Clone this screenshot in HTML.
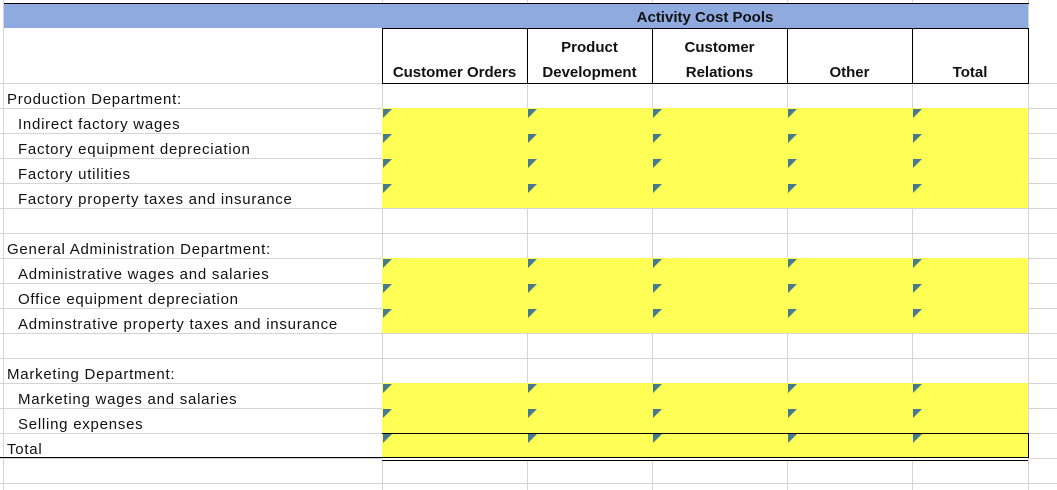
<!DOCTYPE html>
<html><head><style>
body{margin:0;width:1057px;height:490px;overflow:hidden;background:#fff;position:relative;font-family:"Liberation Sans",sans-serif;}
div{position:absolute;box-sizing:border-box}
.h{height:1px;background:#d4d4d4;left:0;width:1057px}
.v{width:1px;background:#d4d4d4;top:0;height:490px}
.y{background:#ffff55;left:382px;width:646px}
.t{font-size:15px;letter-spacing:0.75px;color:#111;white-space:nowrap;line-height:25px;height:25px;padding-top:3px}
.m{width:0;height:0;border-top:9px solid #457a90;border-right:9px solid transparent}
.hd{font-size:15px;font-weight:bold;color:#111;text-align:center;line-height:25px;white-space:nowrap}
</style></head><body>
<div class="v" style="left:3px"></div>
<div class="v" style="left:382px"></div>
<div class="v" style="left:527px"></div>
<div class="v" style="left:652px"></div>
<div class="v" style="left:787px"></div>
<div class="v" style="left:912px"></div>
<div class="v" style="left:1028px"></div>
<div class="h" style="top:83px"></div><div class="h" style="top:108px"></div><div class="h" style="top:133px"></div><div class="h" style="top:158px"></div><div class="h" style="top:183px"></div><div class="h" style="top:208px"></div><div class="h" style="top:233px"></div><div class="h" style="top:258px"></div><div class="h" style="top:283px"></div><div class="h" style="top:308px"></div><div class="h" style="top:333px"></div><div class="h" style="top:358px"></div><div class="h" style="top:383px"></div><div class="h" style="top:408px"></div><div class="h" style="top:433px"></div><div class="h" style="top:458px"></div><div class="h" style="top:483px"></div>
<div style="left:4px;top:3px;width:1025px;height:1px;background:#000"></div>
<div style="left:4px;top:4px;width:1024px;height:24px;background:#8eaadf"></div>
<div class="hd" style="left:382px;top:5px;width:646px;line-height:26px">Activity Cost Pools</div>
<div style="left:382px;top:28px;width:647px;height:56px;background:#fff;border:1px solid #000"></div>
<div style="left:527px;top:28px;width:1px;height:56px;background:#000"></div>
<div style="left:652px;top:28px;width:1px;height:56px;background:#000"></div>
<div style="left:787px;top:28px;width:1px;height:56px;background:#000"></div>
<div style="left:912px;top:28px;width:1px;height:56px;background:#000"></div>
<div class="hd" style="left:382px;top:60px;width:145px">Customer Orders</div>
<div class="hd" style="left:527px;top:35px;width:125px">Product<br>Development</div>
<div class="hd" style="left:652px;top:35px;width:135px">Customer<br>Relations</div>
<div class="hd" style="left:787px;top:60px;width:125px">Other</div>
<div class="hd" style="left:912px;top:60px;width:116px">Total</div>
<div class="y" style="top:108px;height:100px"></div>
<div class="y" style="top:258px;height:75px"></div>
<div class="y" style="top:383px;height:75px"></div>
<div style="left:382px;top:433px;width:646px;height:1px;background:#000"></div>
<div style="left:0;top:457px;width:382px;height:1px;background:#000"></div>
<div style="left:382px;top:457px;width:646px;height:4px;border-top:1px solid #000;border-bottom:1px solid #000;background:#fff"></div>
<div style="left:1028px;top:433px;width:1px;height:25px;background:#000"></div>
<div class="t" style="left:7px;top:84px">Production Department:</div>
<div class="t" style="left:18px;top:109px">Indirect factory wages</div>
<div class="t" style="left:18px;top:134px">Factory equipment depreciation</div>
<div class="t" style="left:18px;top:159px">Factory utilities</div>
<div class="t" style="left:18px;top:184px">Factory property taxes and insurance</div>
<div class="t" style="left:7px;top:234px">General Administration Department:</div>
<div class="t" style="left:18px;top:259px">Administrative wages and salaries</div>
<div class="t" style="left:18px;top:284px">Office equipment depreciation</div>
<div class="t" style="left:18px;top:309px">Adminstrative property taxes and insurance</div>
<div class="t" style="left:7px;top:359px">Marketing Department:</div>
<div class="t" style="left:18px;top:384px">Marketing wages and salaries</div>
<div class="t" style="left:18px;top:409px">Selling expenses</div>
<div class="t" style="left:7px;top:434px">Total</div>
<script>
var cols=[383,528,653,788,913],rows=[109,134,159,184,259,284,309,384,409,434],h='';
rows.forEach(function(r){cols.forEach(function(c){h+='<div class="m" style="left:'+c+'px;top:'+r+'px"></div>';});});
document.body.insertAdjacentHTML('beforeend',h);
</script>
</body></html>
